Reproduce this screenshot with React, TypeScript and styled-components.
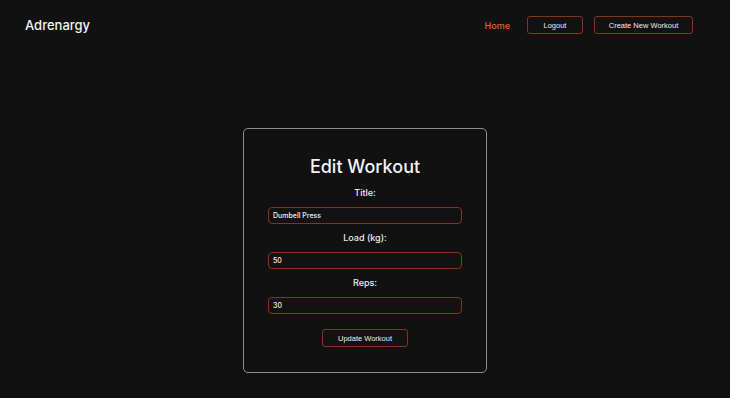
import React from "react";
import styled, { createGlobalStyle } from "styled-components";

const Global = createGlobalStyle`
  html, body { margin: 0; padding: 0; background: #111111; }
  body { font-family: "Inter", "Noto Sans", sans-serif; color: #f2f2f2; }
  * { box-sizing: border-box; }
`;

const Page = styled.div`
  min-height: 398px;
  background: #111111;
  display: flex;
  flex-direction: column;
  align-items: center;
`;

const Nav = styled.nav`
  width: 100%;
  height: 50px;
  display: flex;
  align-items: center;
  justify-content: space-between;
  padding: 0 37px 0 25px;
`;

const Brand = styled.div`
  font-size: 13px;
  font-weight: 500;
  color: #f4f4f4;
  letter-spacing: 0px;
`;

const NavLinks = styled.div`
  display: flex;
  align-items: center;
`;

const HomeLink = styled.a`
  font-size: 9px;
  font-weight: 500;
  color: #e2621f;
  margin-right: 17px;
  text-decoration: none;
`;

const OutlineButton = styled.button<{ $w: number; $gap?: number }>`
  width: ${(p) => p.$w}px;
  height: 18px;
  margin-left: ${(p) => p.$gap ?? 0}px;
  background: #121212;
  border: 1px solid #7f3817;
  border-radius: 3px;
  color: #ececec;
  font-family: "Liberation Sans", Arial, sans-serif;
  font-size: 7.5px;
  padding: 0;
  display: flex;
  align-items: center;
  justify-content: center;
`;

const Card = styled.div`
  margin-top: 78px;
  width: 244px;
  border: 1px solid #8f8f8f;
  border-radius: 5px;
  padding: 26px 24px 25px;
  display: flex;
  flex-direction: column;
  align-items: center;
`;

const Heading = styled.h1`
  margin: 0;
  font-size: 18px;
  line-height: 24px;
  font-weight: 500;
  color: #f2f2f2;
`;

const Label = styled.label`
  margin: 7px 0 7px;
  font-size: 9px;
  line-height: 14px;
  font-weight: 500;
  color: #ececec;
`;

const Input = styled.input`
  width: 100%;
  height: 17px;
  background: #121212;
  border: 1px solid #7f3817;
  border-radius: 4px;
  padding: 0 4px;
  color: #f0f0f0;
  font-family: "Inter", "Noto Sans", sans-serif;
  font-size: 7px;
  font-weight: 500;
  outline: none;
`;

const SubmitButton = styled(OutlineButton)`
  margin-top: 15px;
`;

export default function App() {
  return (
    <>
      <Global />
      <Page>
        <Nav>
          <Brand>Adrenargy</Brand>
          <NavLinks>
            <HomeLink href="#">Home</HomeLink>
            <OutlineButton $w={56}>Logout</OutlineButton>
            <OutlineButton $w={99} $gap={11}>
              Create New Workout
            </OutlineButton>
          </NavLinks>
        </Nav>
        <Card>
          <Heading>Edit Workout</Heading>
          <Label>Title:</Label>
          <Input defaultValue="Dumbell Press" />
          <Label>Load (kg):</Label>
          <Input defaultValue="50" />
          <Label>Reps:</Label>
          <Input defaultValue="30" />
          <SubmitButton $w={86}>Update Workout</SubmitButton>
        </Card>
      </Page>
    </>
  );
}
